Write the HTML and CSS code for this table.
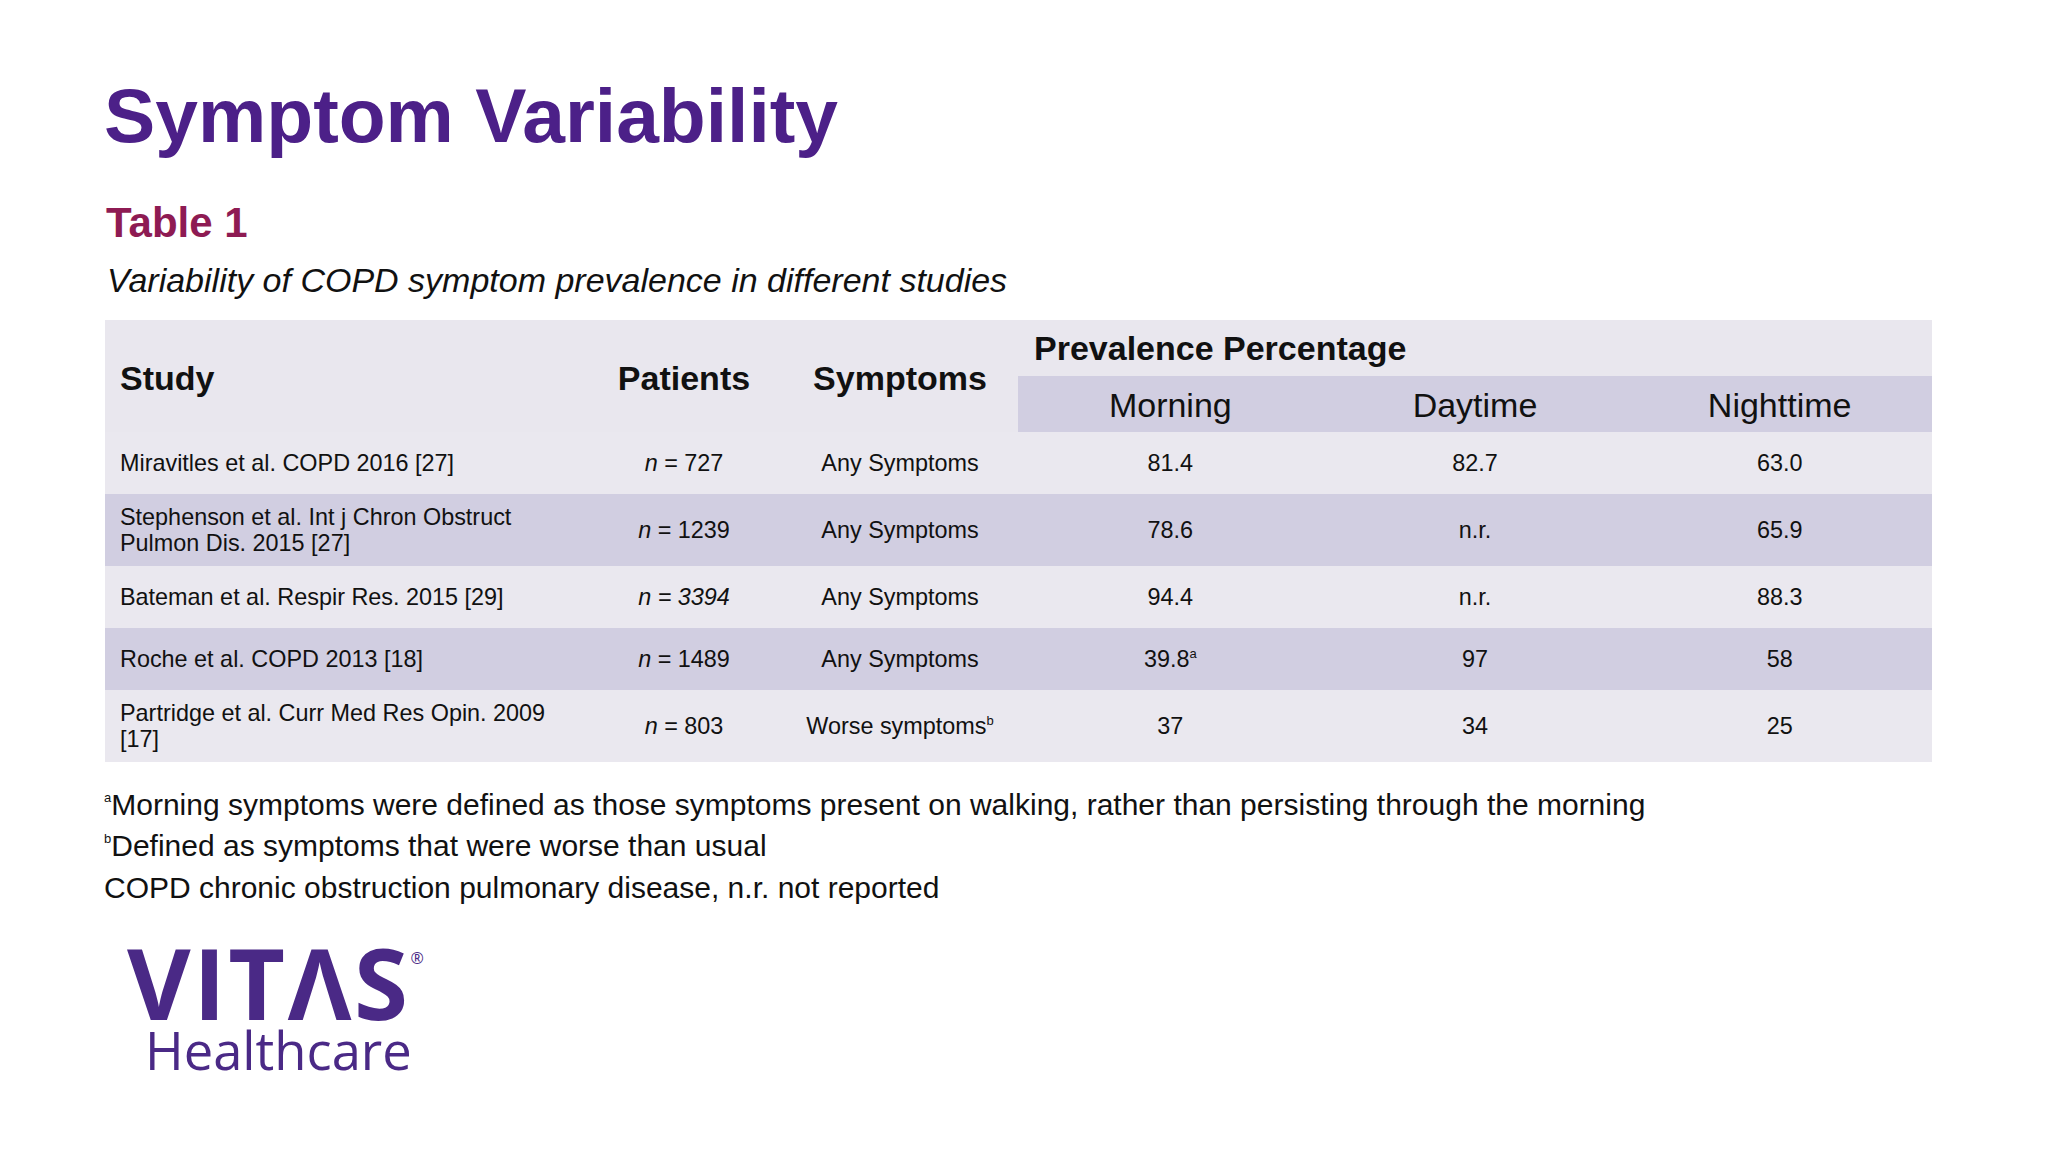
FILE: index.html
```html
<!DOCTYPE html>
<html lang="en">
<head>
<meta charset="utf-8">
<title>Symptom Variability</title>
<link rel="stylesheet" href="styles.css">
</head>
<body>
<div class="slide">
  <h1 class="title">Symptom Variability</h1>
  <h2 class="table-label">Table 1</h2>
  <p class="caption">Variability of COPD symptom prevalence in different studies</p>

  <table class="data">
    <colgroup>
      <col class="c-study">
      <col class="c-patients">
      <col class="c-symptoms">
      <col class="c-val">
      <col class="c-val">
      <col class="c-val">
    </colgroup>
    <thead>
      <tr class="h1row">
        <th rowspan="2" class="left main">Study</th>
        <th rowspan="2" class="main">Patients</th>
        <th rowspan="2" class="main">Symptoms</th>
        <th colspan="3" class="left prev">Prevalence Percentage</th>
      </tr>
      <tr class="h2row">
        <th class="sub">Morning</th>
        <th class="sub">Daytime</th>
        <th class="sub">Nighttime</th>
      </tr>
    </thead>
    <tbody>
      <tr class="light single">
        <td class="left">Miravitles et al. COPD 2016 [27]</td>
        <td><i>n</i> = 727</td>
        <td>Any Symptoms</td>
        <td>81.4</td>
        <td>82.7</td>
        <td>63.0</td>
      </tr>
      <tr class="dark double">
        <td class="left">Stephenson et al. Int j Chron Obstruct<br>Pulmon Dis. 2015 [27]</td>
        <td><i>n</i> = 1239</td>
        <td>Any Symptoms</td>
        <td>78.6</td>
        <td>n.r.</td>
        <td>65.9</td>
      </tr>
      <tr class="light single">
        <td class="left">Bateman et al. Respir Res. 2015 [29]</td>
        <td><i>n = 3394</i></td>
        <td>Any Symptoms</td>
        <td>94.4</td>
        <td>n.r.</td>
        <td>88.3</td>
      </tr>
      <tr class="dark single">
        <td class="left">Roche et al. COPD 2013 [18]</td>
        <td><i>n</i> = 1489</td>
        <td>Any Symptoms</td>
        <td>39.8<sup>a</sup></td>
        <td>97</td>
        <td>58</td>
      </tr>
      <tr class="light double">
        <td class="left">Partridge et al. Curr Med Res Opin. 2009<br>[17]</td>
        <td><i>n</i> = 803</td>
        <td>Worse symptoms<sup>b</sup></td>
        <td>37</td>
        <td>34</td>
        <td>25</td>
      </tr>
    </tbody>
  </table>

  <div class="notes">
    <p><sup>a</sup>Morning symptoms were defined as those symptoms present on walking, rather than persisting through the morning</p>
    <p><sup>b</sup>Defined as symptoms that were worse than usual</p>
    <p>COPD chronic obstruction pulmonary disease, n.r. not reported</p>
  </div>

  <div class="logo">
    <div class="logo-main">VIT<span class="lam">Λ</span>S<span class="reg">®</span></div>
    <div class="logo-sub">Healthcare</div>
  </div>
</div>
</body>
</html>
```
FILE: styles.css
```css
html, body {
  margin: 0;
  padding: 0;
  background: #ffffff;
}

body {
  font-family: "Liberation Sans", Arial, sans-serif;
  color: #111111;
}

.slide {
  width: 2048px;
  height: 1152px;
  box-sizing: border-box;
  padding: 85px 0 0 104px;
  overflow: hidden;
}

.title {
  margin: 0;
  font-size: 76.8px;
  line-height: 60px;
  font-weight: 700;
  color: #4c2088;
}

.table-label {
  margin: 60.5px 0 0 2px;
  font-size: 42px;
  line-height: 34px;
  font-weight: 700;
  color: #8e1b53;
}

.caption {
  margin: 20.7px 0 0 3px;
  font-size: 34px;
  line-height: 40px;
  font-style: italic;
  color: #111111;
}

.data {
  margin: 19.8px 0 0 1px;
  width: 1827px;
  border-collapse: collapse;
  table-layout: fixed;
  font-size: 23.4px;
}

.c-study { width: 481px; }
.c-patients { width: 196px; }
.c-symptoms { width: 236px; }
.c-val { width: 304.67px; }

.data th,
.data td {
  padding: 0;
  text-align: center;
  vertical-align: middle;
  color: #111111;
}

.data .left {
  text-align: left;
  padding-left: 15px;
}

.data thead th {
  font-size: 34px;
  font-weight: 700;
  background: #e9e7ee;
  line-height: 40px;
}

.data thead th.main {
  padding-top: 4px;
}

.h1row { height: 56px; }
.h2row { height: 56px; }

.data thead th.prev {
  padding-left: 16px;
}

.data thead th.sub {
  font-weight: 400;
  background: #d1cee1;
  padding-top: 3px;
}

.data td {
  line-height: 26px;
}

.single { height: 62px; }
.double { height: 72px; }

.light td { background: #eae8ef; }
.dark td { background: #d1cee1; }

.data sup {
  font-size: 13px;
  line-height: 0;
  vertical-align: 9px;
}

.notes {
  margin-top: 21.85px;
  font-size: 30px;
  line-height: 41.5px;
  color: #111111;
}

.notes p {
  margin: 0;
}

.notes sup {
  font-size: 13px;
  line-height: 0;
  vertical-align: 13px;
}

.logo {
  margin: 34px 0 0 23px;
  color: #4a2986;
  font-family: "Open Sans", "Noto Sans", sans-serif;
}

.logo-main {
  font-size: 98px;
  line-height: 80px;
  font-weight: 700;
  letter-spacing: 2.6px;
  white-space: nowrap;
}

.logo-main .reg {
  font-size: 16px;
  font-weight: 400;
  vertical-align: 56px;
  line-height: 0;
  letter-spacing: 0;
  margin-left: 0;
}

.logo-sub {
  margin: 2.4px 0 0 18px;
  font-size: 52.5px;
  line-height: 50px;
  font-weight: 400;
  letter-spacing: 0;
}
```
